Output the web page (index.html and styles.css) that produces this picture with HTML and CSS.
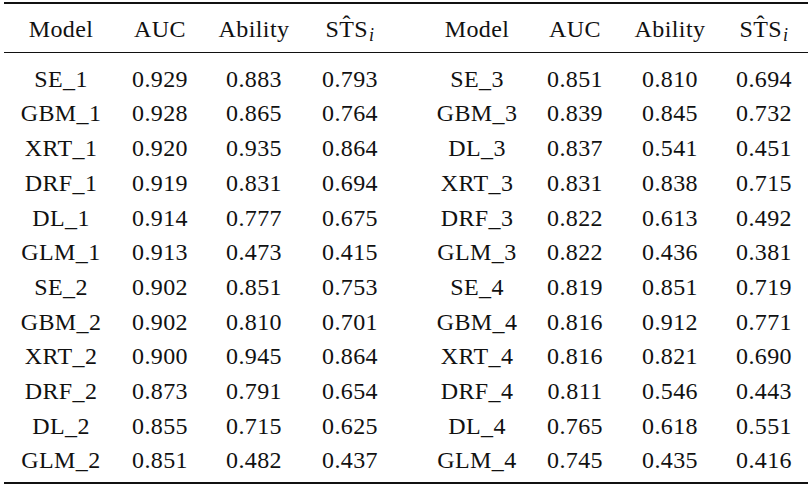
FILE: index.html
```html
<!DOCTYPE html>
<html>
<head>
<meta charset="utf-8">
<link rel="stylesheet" href="styles.css">
</head>
<body>
<div class="wrap">
<table class="results">
<colgroup>
<col class="c-model"><col class="c-auc"><col class="c-abil"><col class="c-sts">
<col class="c-gap">
<col class="c-model2"><col class="c-auc2"><col class="c-abil2"><col class="c-sts2">
</colgroup>
<thead>
<tr class="head">
<th>Model</th><th>AUC</th><th>Ability</th><th>S<span class="hat">T&#770;</span>S<sub class="idx">i</sub></th>
<th></th>
<th>Model</th><th>AUC</th><th>Ability</th><th>S<span class="hat">T&#770;</span>S<sub class="idx">i</sub></th>
</tr>
</thead>
<tbody>
<tr class="first"><td>SE_1</td><td>0.929</td><td>0.883</td><td>0.793</td><td></td><td>SE_3</td><td>0.851</td><td>0.810</td><td>0.694</td></tr>
<tr><td>GBM_1</td><td>0.928</td><td>0.865</td><td>0.764</td><td></td><td>GBM_3</td><td>0.839</td><td>0.845</td><td>0.732</td></tr>
<tr><td>XRT_1</td><td>0.920</td><td>0.935</td><td>0.864</td><td></td><td>DL_3</td><td>0.837</td><td>0.541</td><td>0.451</td></tr>
<tr><td>DRF_1</td><td>0.919</td><td>0.831</td><td>0.694</td><td></td><td>XRT_3</td><td>0.831</td><td>0.838</td><td>0.715</td></tr>
<tr><td>DL_1</td><td>0.914</td><td>0.777</td><td>0.675</td><td></td><td>DRF_3</td><td>0.822</td><td>0.613</td><td>0.492</td></tr>
<tr><td>GLM_1</td><td>0.913</td><td>0.473</td><td>0.415</td><td></td><td>GLM_3</td><td>0.822</td><td>0.436</td><td>0.381</td></tr>
<tr><td>SE_2</td><td>0.902</td><td>0.851</td><td>0.753</td><td></td><td>SE_4</td><td>0.819</td><td>0.851</td><td>0.719</td></tr>
<tr><td>GBM_2</td><td>0.902</td><td>0.810</td><td>0.701</td><td></td><td>GBM_4</td><td>0.816</td><td>0.912</td><td>0.771</td></tr>
<tr><td>XRT_2</td><td>0.900</td><td>0.945</td><td>0.864</td><td></td><td>XRT_4</td><td>0.816</td><td>0.821</td><td>0.690</td></tr>
<tr><td>DRF_2</td><td>0.873</td><td>0.791</td><td>0.654</td><td></td><td>DRF_4</td><td>0.811</td><td>0.546</td><td>0.443</td></tr>
<tr><td>DL_2</td><td>0.855</td><td>0.715</td><td>0.625</td><td></td><td>DL_4</td><td>0.765</td><td>0.618</td><td>0.551</td></tr>
<tr class="last"><td>GLM_2</td><td>0.851</td><td>0.482</td><td>0.437</td><td></td><td>GLM_4</td><td>0.745</td><td>0.435</td><td>0.416</td></tr>
</tbody>
</table>
</div>
</body>
</html>
```

FILE: styles.css
```css
html, body {
  margin: 0;
  padding: 0;
  background: #ffffff;
}

.wrap {
  padding: 2px 3px 0 4px;
}

.results {
  width: 804px;
  table-layout: fixed;
  border-collapse: collapse;
  font-family: "Liberation Serif", "DejaVu Serif", serif;
  font-size: 24px;
  letter-spacing: 0.4px;
  color: #111111;
}

.c-model { width: 114px; }
.c-auc { width: 84px; }
.c-abil { width: 104px; }
.c-sts { width: 88px; }
.c-gap { width: 30px; }
.c-model2 { width: 106px; }
.c-auc2 { width: 90px; }
.c-abil2 { width: 100px; }
.c-sts2 { width: 88px; }

.results th,
.results td {
  padding: 0;
  text-align: center;
  font-weight: normal;
  line-height: 34.7px;
  white-space: nowrap;
}

.head {
  border-top: 2px solid #111111;
  border-bottom: 1px solid #111111;
}

.head th {
  padding-top: 7.5px;
  padding-bottom: 6px;
}

.first td {
  padding-top: 8.5px;
}

.last {
  border-bottom: 2px solid #111111;
}

.last td {
  padding-bottom: 3.5px;
}

.hat {
  display: inline;
}

.idx {
  font-style: italic;
  font-size: 18px;
  line-height: 0;
  vertical-align: -4px;
  margin-left: 1px;
}
```
